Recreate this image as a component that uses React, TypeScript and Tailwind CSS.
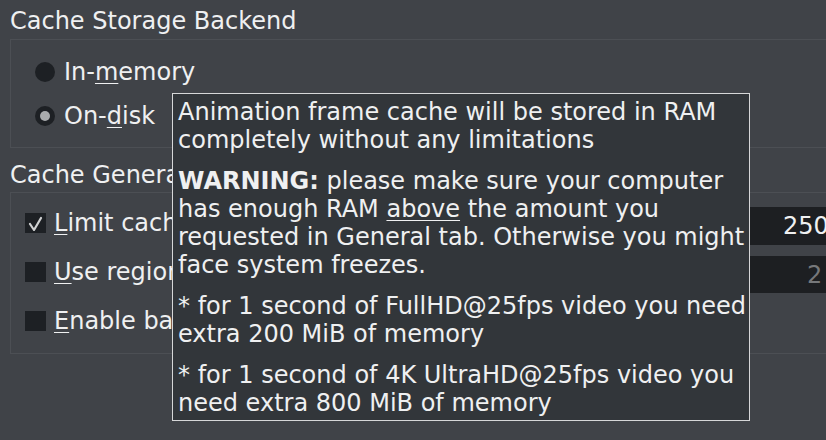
export default function App() {
  return (
    <div className="relative h-[440px] w-[826px] overflow-hidden bg-[#404348] text-[24px] leading-[28px] text-[#eff0f1] [font-family:'DejaVu_Sans',sans-serif]">
      {/* Cache Storage Backend */}
      <div className="pl-[10px] pt-[7px]">Cache Storage Backend</div>
      <div className="ml-[10px] mt-[4px] w-[840px] border border-[#4c4f54] pb-[17px] pl-[24px] pt-[18px]">
        <div className="flex flex-col gap-[16px]">
          <div className="flex h-[28px] items-center gap-[9px]">
            <span className="h-[20px] w-[20px] rounded-full bg-[#1d2024]" />
            <span>
              In-<span className="underline decoration-1 underline-offset-[3px]">m</span>emory
            </span>
          </div>
          <div className="flex h-[28px] items-center gap-[9px]">
            <span className="flex h-[20px] w-[20px] items-center justify-center rounded-full bg-[#1d2024]">
              <span className="h-[10px] w-[10px] rounded-full bg-[#a9abad]" />
            </span>
            <span>
              On-<span className="underline decoration-1 underline-offset-[3px]">d</span>isk
            </span>
          </div>
        </div>
      </div>

      {/* Cache Generation */}
      <div className="mt-[13px] pl-[10px]">Cache Generation Options</div>
      <div className="ml-[10px] mt-[3px] w-[840px] border border-[#4c4f54] pb-[18px] pl-[14px] pt-[16px]">
        <div className="flex flex-col gap-[21px]">
          <div className="flex h-[28px] items-center">
            <div className="flex w-[721px] items-center gap-[8px]">
              <span className="flex h-[20px] w-[21px] items-center justify-center bg-[#1d2024]">
                <svg width="15" height="15" viewBox="0 0 15 15" fill="none">
                  <path d="M2 8 L6 14 L13 2" stroke="#d0d1d2" strokeWidth="2.2" strokeLinejoin="round" strokeLinecap="round" />
                </svg>
              </span>
              <span className="whitespace-nowrap">
                <span className="underline decoration-1 underline-offset-[3px]">L</span>imit cache size
              </span>
            </div>
            <div className="mt-[6px] flex h-[38px] w-[100px] shrink-0 items-center bg-[#1d1f22] pl-[37px]">250</div>
          </div>
          <div className="flex h-[28px] items-center">
            <div className="flex w-[721px] items-center gap-[8px]">
              <span className="h-[20px] w-[21px] bg-[#1d2024]" />
              <span className="whitespace-nowrap">
                <span className="underline decoration-1 underline-offset-[3px]">U</span>se region of interest
              </span>
            </div>
            <div className="mt-[5px] flex h-[37px] w-[100px] shrink-0 items-center bg-[#1d1f22] pl-[61px] text-[#76787b]">2</div>
          </div>
          <div className="flex h-[28px] items-center gap-[8px]">
            <span className="h-[20px] w-[21px] bg-[#1d2024]" />
            <span className="whitespace-nowrap">
              <span className="underline decoration-1 underline-offset-[3px]">E</span>nable background cache generation
            </span>
          </div>
        </div>
      </div>

      {/* Tooltip */}
      <div className="absolute left-[172px] top-[93px] w-[578px] border border-[#d6d7d8] bg-[#32363a] px-[5px] pb-[3px] pt-[4px] text-[#eff0f1]">
        <p className="whitespace-nowrap">
          Animation frame cache will be stored in RAM
          <br />
          completely without any limitations
        </p>
        <p className="mt-[13px] whitespace-nowrap">
          <b>WARNING:</b> please make sure your computer
          <br />
          has enough RAM <span className="underline decoration-1 underline-offset-[3px]">above</span> the amount you
          <br />
          requested in General tab. Otherwise you might
          <br />
          face system freezes.
        </p>
        <p className="mt-[13px] whitespace-nowrap">
          * for 1 second of FullHD@25fps video you need
          <br />
          extra 200 MiB of memory
        </p>
        <p className="mt-[13px] whitespace-nowrap">
          * for 1 second of 4K UltraHD@25fps video you
          <br />
          need extra 800 MiB of memory
        </p>
      </div>
    </div>
  );
}
